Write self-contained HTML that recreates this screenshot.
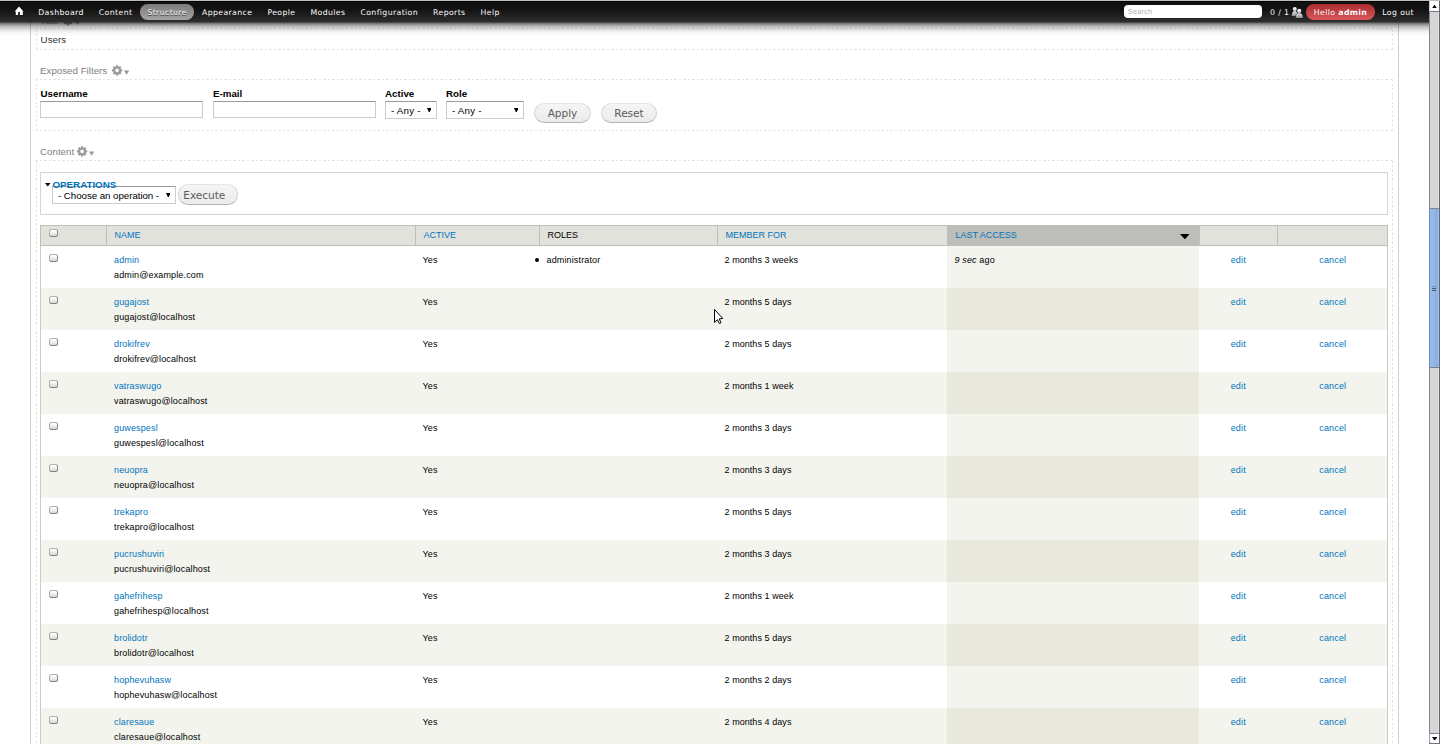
<!DOCTYPE html>
<html lang="en">
<head>
<meta charset="utf-8">
<title>Users | Views</title>
<style>
*{box-sizing:border-box;}
html,body{margin:0;padding:0;}
body{width:1440px;height:744px;overflow:hidden;position:relative;background:#fff;color:#000;
  font-family:"Liberation Sans",Arial,Helvetica,sans-serif;font-size:9.75px;line-height:15px;}
a{color:#0074bd;text-decoration:none;}
#page{position:absolute;left:0;top:0;width:1429px;height:744px;overflow:hidden;}
#topline{position:absolute;left:0;top:0;width:1440px;height:1px;background:#bfbfbf;z-index:50;}

/* ---------- admin toolbar ---------- */
#admin-menu{position:absolute;left:0;top:1px;width:1429px;height:21px;z-index:20;
  background:linear-gradient(#000 0,#000 1px,#111 1.5px,#121212 40%,#2e2e2e 100%);
  font-family:"DejaVu Sans",Verdana,sans-serif;font-size:7.75px;line-height:11.25px;color:#fafafa;letter-spacing:0.39px;}
#admin-shadow{position:absolute;left:0;top:22px;width:1429px;height:15px;z-index:19;pointer-events:none;
  background:linear-gradient(rgba(0,0,0,0.700) 0.5px,rgba(0,0,0,0.530) 1.5px,rgba(0,0,0,0.430) 2.5px,rgba(0,0,0,0.340) 3.5px,rgba(0,0,0,0.270) 4.5px,rgba(0,0,0,0.215) 5.5px,rgba(0,0,0,0.170) 6.5px,rgba(0,0,0,0.137) 7.5px,rgba(0,0,0,0.098) 8.5px,rgba(0,0,0,0.067) 9.5px,rgba(0,0,0,0.043) 10.5px,rgba(0,0,0,0.027) 11.5px,rgba(0,0,0,0.016) 12.5px,rgba(0,0,0,0.008) 13.5px,rgba(0,0,0,0.000) 14.5px);}
#admin-menu ul{list-style:none;margin:0;padding:0;position:absolute;top:3.4px;}
#admin-menu ul.left{left:7.5px;}
#admin-menu ul.right{right:7.5px;}
#admin-menu li{float:left;margin:0;padding:0;}
#admin-menu li a{display:block;color:#fafafa;padding:2.85px 7.5px 1.25px;height:15.35px;border-radius:7.7px;white-space:nowrap;}
#admin-menu li a.active-trail{background:linear-gradient(#7b7b7b,#a3a3a3);text-shadow:0 1px 0 #333;}
#admin-menu li.home a{position:relative;width:23.25px;}
#admin-menu li.home svg{position:absolute;left:6.5px;top:1.6px;}
#admin-menu li.account a{background:linear-gradient(#aa2c31,#d9585b);}
#admin-menu li.search{padding:0.85px 0 0 0.5px;}
#admin-menu li.search .box{display:block;width:138px;height:13px;border-radius:4px;background:#fff;color:#b0b0b0;letter-spacing:0;
  font-size:7.25px;line-height:13px;padding:0 0 0 4px;letter-spacing:0.2px;font-family:"Liberation Sans",Arial,sans-serif;}
#admin-menu li.users a{padding-right:17px;position:relative;padding-left:8px;}
#admin-menu li.users svg{position:absolute;left:29.1px;top:1.6px;width:13px;height:13px;}

/* ---------- frame ---------- */
#frame{position:absolute;left:30px;top:-40px;width:1369px;height:900px;border-left:1px solid #cfcfcf;border-right:1px solid #cfcfcf;}
.section-title{position:absolute;left:40px;color:#818181;font-size:9.75px;line-height:15.75px;white-space:nowrap;}
.preview-section{position:absolute;left:36px;width:1357px;border:1px solid transparent;padding:0;background-origin:border-box;
  background:
   repeating-linear-gradient(90deg,#e3e3e3 0,#e3e3e3 2.25px,transparent 2.25px,transparent 4.5px) -0.5px 0/100% 1px no-repeat border-box,
   repeating-linear-gradient(90deg,#e3e3e3 0,#e3e3e3 2.25px,transparent 2.25px,transparent 4.5px) -0.5px 100%/100% 1px no-repeat border-box,
   repeating-linear-gradient(0deg,#e3e3e3 0,#e3e3e3 2.25px,transparent 2.25px,transparent 4.5px) 0 0/1px 100% no-repeat border-box,
   repeating-linear-gradient(0deg,#e3e3e3 0,#e3e3e3 2.25px,transparent 2.25px,transparent 4.5px) 100% 0/1px 100% no-repeat border-box;}
.ptitle{position:absolute;left:3.6px;top:2.9px;line-height:15px;color:#333;}
.gear{vertical-align:-2px;margin-left:4.5px;}
/* exposed form (coords relative to padding box of section: x0=37,y0=80) */
form.exposed{display:block;margin:0;}
form.exposed .w{position:absolute;top:6.4px;}
form.exposed label{display:block;font-weight:bold;font-size:9.75px;line-height:15px;height:14.6px;color:#000;}
.txt{display:block;width:163px;margin-left:-0.5px;height:17px;border:1px solid #ccc;border-top-color:#999;background:#fff;}
.select{display:block;position:relative;height:18px;border:1px solid #ccc;border-top-color:#999;background:#fff;
  font-size:9.75px;line-height:16px;padding:1px 0 0 5px;color:#000;white-space:nowrap;letter-spacing:0.2px;}
.select .sa{position:absolute;right:4.7px;top:6px;}
.btn{position:absolute;display:block;height:20px;border:1px solid #e4e4e4;border-bottom-color:#b4b4b4;border-left-color:#d2d2d2;border-right-color:#d2d2d2;
  border-radius:10px;background:linear-gradient(#f5f5f5,#ebebeb);color:#5a5a5a;text-align:center;
  font-family:"DejaVu Sans",Verdana,sans-serif;font-size:10.5px;line-height:18px;}
.btn.exec{height:21px;line-height:21px;text-align:left;padding-left:4.3px;}
/* operations fieldset (section padding box origin x0=37,y0=161) */
fieldset.ops{position:absolute;left:3px;top:11px;width:1348px;height:43px;margin:0;padding:0;border:1px solid #d4d4d4;}
fieldset.ops legend{position:absolute;z-index:3;left:4px;top:3.5px;padding:0;font-weight:bold;font-size:9.75px;line-height:15px;text-transform:uppercase;white-space:nowrap;}
fieldset.ops legend svg{vertical-align:1px;margin-right:2px;}
/* table */
table.views{position:absolute;left:3px;top:64px;width:1348px;table-layout:fixed;border-collapse:separate;border-spacing:0;
  font-size:9px;line-height:15px;}
table.views th{text-align:left;text-transform:uppercase;font-weight:normal;background:#e1e2dc;border:solid #bebfb9;border-width:1px 0 1px 1px;
  padding:0.5px 7px 0 7.5px;color:#000;height:21px;line-height:15px;vertical-align:middle;}
table.views th:last-child{border-right-width:1px;}
table.views th.active{background:#bdbeb9;}
table.views th.active a{display:block;position:relative;}
table.views th .sort{position:absolute;right:2.5px;top:5.6px;}
table.views td{padding:7px 7px 5px 7.5px;vertical-align:top;height:42px;letter-spacing:0.14px;}
table.views td:first-child{border-left:1px solid #cbccc6;padding-left:7px;}
table.views td:last-child{border-right:1px solid #cbccc6;padding-right:6px;}
table.views tr.odd td{background:#fff;}
table.views tr.even td{background:#f3f4ee;}
table.views tr.odd td.active{background:#f3f4ee;}
table.views tr.even td.active{background:#e9e9dd;}
table.views td.op{text-align:center;}
table.views td.nm{padding-left:8px;}
table.views td.mf{letter-spacing:0.06px;}
table.views td ul{margin:0;padding:0;list-style:none;}
table.views td ul li{position:relative;}
table.views td ul li:before{content:"";position:absolute;left:-12px;top:4.8px;width:4px;height:4px;border-radius:50%;background:#000;}
table.views em{font-style:italic;}
.cb{display:block;width:8.8px;height:8.8px;border:1px solid #9b9b98;border-color:#b0b0ad #8a8a87 #7f7f7c #aaaaa7;border-radius:2.5px;
  background:linear-gradient(#ffffff 15%,#d6d6d6);margin:0.7px 0 0 0.9px;position:relative;}
th .cb{top:-3px;}
/* scrollbar */
#sb{position:absolute;left:1429px;top:1px;width:11px;height:743px;background:#d6d5d3;border-left:1px solid #7c8591;border-right:1px solid #5f6874;border-bottom:1px solid #6b7480;
  box-shadow:inset -1px 0 0 #e4e2e0;}
#sb .up,#sb .down{position:absolute;left:-1px;width:10px;background:#fff;border-left:1px solid #c5c9ce;}
#sb .up{top:0;border-bottom:1px solid #6f7a86;height:11px;}
#sb .down{bottom:0;border-top:1px solid #7f8a96;height:10px;border-left-color:#99a1ab;border-bottom-left-radius:2px;}
#sb svg{position:absolute;}
#sb .thumb{position:absolute;left:-1px;top:207px;width:10px;height:160px;border-left:1px solid #6c8ab5;border-top:1px solid #7f8791;border-bottom:1px solid #777f89;
  background:linear-gradient(90deg,#97baea 0,#95b8e8 48%,#8bafde 52%,#8db1e1 88%,#9dbfee 89%);}
#cursor{position:absolute;left:713px;top:308.3px;z-index:60;}

/* native controls reset */
input.txt,input.box,button.btn,input.cb,.select select{-webkit-appearance:none;appearance:none;outline:0;box-shadow:none;}
input.txt,input.box,button.btn,.select select{margin:0;}
input.txt{padding:0 2px;font:inherit;margin-left:-0.5px;border-radius:0;}
.select select{display:block;position:absolute;left:0;top:0;width:100%;height:100%;border:0;border-radius:0;background:transparent;padding:1px 0 0 5px;
  font:inherit;letter-spacing:inherit;line-height:16px;color:#000;}
button.btn{padding:0;cursor:pointer;}
button.btn.exec{padding-left:4.3px;}
input.cb{padding:0;margin:0.7px 0 0 0.9px;}
#admin-menu li.search input.box{border:0;}
#admin-menu li.search input.box::placeholder{color:#b0b0b0;opacity:1;}
</style>
</head>
<body>
<div id="topline"></div>
<div id="page">
<div id="admin-menu">
  <ul class="left">
    <li class="home"><a href="#"><svg width="11" height="10" viewBox="0 0 11 10"><path fill="#fff" d="M5 0.6 L9.5 5.5 H8.8 V9.1 H5.95 V6 H4.15 V9.1 H1.8 V5.5 H0.7 Z"/></svg></a></li>
    <li><a href="#">Dashboard</a></li>
    <li><a href="#">Content</a></li>
    <li><a href="#" class="active-trail">Structure</a></li>
    <li><a href="#">Appearance</a></li>
    <li><a href="#">People</a></li>
    <li><a href="#">Modules</a></li>
    <li><a href="#">Configuration</a></li>
    <li><a href="#">Reports</a></li>
    <li><a href="#">Help</a></li>
  </ul>
  <ul class="right">
    <li class="search"><input type="text" class="box" placeholder="Search"></li>
    <li class="users"><a href="#">0 / 1<svg viewBox="0 0 13 13"><defs><linearGradient id="ub" x1="0" y1="0" x2="0" y2="1"><stop offset="0" stop-color="#e6e6e6"/><stop offset="1" stop-color="#8e8e8e"/></linearGradient><linearGradient id="uh" x1="0" y1="0" x2="0" y2="1"><stop offset="0" stop-color="#ffffff"/><stop offset="1" stop-color="#d2d2d2"/></linearGradient></defs><g><path d="M0.7 10.1 C0.7 6.6 2 5 3.75 5 C5.5 5 6.8 6.6 6.8 10.1 Z" fill="url(#ub)"/><circle cx="3.75" cy="3" r="2.05" fill="url(#uh)"/></g><g stroke="#1a1a1a" stroke-width="0.7" paint-order="stroke"><path d="M4.7 12 C4.7 8.3 6.2 6.9 8.2 6.9 C10.2 6.9 11.8 8.3 11.8 12 Z" fill="url(#ub)"/><circle cx="8.2" cy="4.9" r="2.1" fill="url(#uh)"/></g></svg></a></li>
    <li class="account"><a href="#">Hello <strong>admin</strong></a></li>
    <li><a href="#">Log out</a></li>
  </ul>
</div>
<div id="admin-shadow"></div>
<div id="frame"></div>
<div class="section-title" style="top:12.5px">Title<svg class="gear" width="18" height="11" viewBox="0 0 18 11"><path fill="#999a95" fill-rule="evenodd" d="M3.90 1.64 L4.02 0.31 L6.18 0.31 L6.30 1.64 L6.91 1.89 L7.93 1.04 L9.46 2.57 L8.61 3.59 L8.86 4.20 L10.19 4.32 L10.19 6.48 L8.86 6.60 L8.61 7.21 L9.46 8.23 L7.93 9.76 L6.91 8.91 L6.30 9.16 L6.18 10.49 L4.02 10.49 L3.90 9.16 L3.29 8.91 L2.27 9.76 L0.74 8.23 L1.59 7.21 L1.34 6.60 L0.01 6.48 L0.01 4.32 L1.34 4.20 L1.59 3.59 L0.74 2.57 L2.27 1.04 L3.29 1.89 Z M3.30 5.40 A1.80 1.80 0 1 0 6.90 5.40 A1.80 1.80 0 1 0 3.30 5.40 Z"/><path fill="#999a95" d="M12 5.4 H17.2 L14.6 9.7 Z"/></svg></div>
<div class="preview-section" style="top:28px;height:22px"><div class="ptitle">Users</div></div>
<div class="section-title" style="top:63.25px">Exposed Filters<svg class="gear" width="18" height="11" viewBox="0 0 18 11"><path fill="#999a95" fill-rule="evenodd" d="M3.90 1.64 L4.02 0.31 L6.18 0.31 L6.30 1.64 L6.91 1.89 L7.93 1.04 L9.46 2.57 L8.61 3.59 L8.86 4.20 L10.19 4.32 L10.19 6.48 L8.86 6.60 L8.61 7.21 L9.46 8.23 L7.93 9.76 L6.91 8.91 L6.30 9.16 L6.18 10.49 L4.02 10.49 L3.90 9.16 L3.29 8.91 L2.27 9.76 L0.74 8.23 L1.59 7.21 L1.34 6.60 L0.01 6.48 L0.01 4.32 L1.34 4.20 L1.59 3.59 L0.74 2.57 L2.27 1.04 L3.29 1.89 Z M3.30 5.40 A1.80 1.80 0 1 0 6.90 5.40 A1.80 1.80 0 1 0 3.30 5.40 Z"/><path fill="#999a95" d="M12 5.4 H17.2 L14.6 9.7 Z"/></svg></div>
<div class="preview-section" style="top:79px;height:52px">
  <form class="exposed">
    <div class="w" style="left:3.5px"><label for="f-name">Username</label><input type="text" id="f-name" class="txt" size="30"></div>
    <div class="w" style="left:176px"><label for="f-mail">E-mail</label><input type="text" id="f-mail" class="txt" size="30"></div>
    <div class="w" style="left:348px"><label for="f-act">Active</label><span class="select" style="width:52px"><select id="f-act"><option>- Any -</option><option>Yes</option><option>No</option></select><svg class="sa" width="4.6" height="4.4" viewBox="0 0 4.6 4.4"><path d="M0 0 H4.6 L2.6 4.4 H2 Z" fill="#000"/></svg></span></div>
    <div class="w" style="left:409px"><label for="f-role">Role</label><span class="select" style="width:78px"><select id="f-role"><option>- Any -</option><option>administrator</option></select><svg class="sa" width="4.6" height="4.4" viewBox="0 0 4.6 4.4"><path d="M0 0 H4.6 L2.6 4.4 H2 Z" fill="#000"/></svg></span></div>
    <button type="button" class="btn" style="left:497px;top:23px;width:57px">Apply</button>
    <button type="button" class="btn" style="left:564px;top:23px;width:56px">Reset</button>
  </form>
</div>
<div class="section-title" style="top:144.25px">Content<svg class="gear" style="margin-left:3.3px" width="18" height="11" viewBox="0 0 18 11"><path fill="#999a95" fill-rule="evenodd" d="M3.90 1.64 L4.02 0.31 L6.18 0.31 L6.30 1.64 L6.91 1.89 L7.93 1.04 L9.46 2.57 L8.61 3.59 L8.86 4.20 L10.19 4.32 L10.19 6.48 L8.86 6.60 L8.61 7.21 L9.46 8.23 L7.93 9.76 L6.91 8.91 L6.30 9.16 L6.18 10.49 L4.02 10.49 L3.90 9.16 L3.29 8.91 L2.27 9.76 L0.74 8.23 L1.59 7.21 L1.34 6.60 L0.01 6.48 L0.01 4.32 L1.34 4.20 L1.59 3.59 L0.74 2.57 L2.27 1.04 L3.29 1.89 Z M3.30 5.40 A1.80 1.80 0 1 0 6.90 5.40 A1.80 1.80 0 1 0 3.30 5.40 Z"/><path fill="#999a95" d="M12 5.4 H17.2 L14.6 9.7 Z"/></svg></div>
<div class="preview-section" style="top:160px;height:700px">
<fieldset class="ops"><legend><svg width="5.5" height="3.5" viewBox="0 0 5.5 3.5"><path d="M0 0 H5.5 L2.75 3.5 Z" fill="#000"/></svg><a href="#">Operations</a></legend>
  <span class="select" style="position:absolute;left:11px;top:13px;width:124px;margin:0;letter-spacing:-0.06px"><select><option>- Choose an operation -</option></select><svg class="sa" width="4.6" height="4.4" viewBox="0 0 4.6 4.4"><path d="M0 0 H4.6 L2.6 4.4 H2 Z" fill="#000"/></svg></span>
  <button type="button" class="btn exec" style="left:137px;top:11px;width:60px">Execute</button>
</fieldset>
<table class="views"><colgroup><col style="width:66px"><col style="width:309px"><col style="width:124px"><col style="width:178px"><col style="width:230px"><col style="width:252px"><col style="width:78px"><col style="width:111px"></colgroup>
<thead><tr><th class="c0"><input type="checkbox" class="cb"></th><th><a href="#">Name</a></th><th><a href="#">Active</a></th><th>Roles</th><th><a href="#">Member for</a></th><th class="active"><a href="#">Last access<svg class="sort" width="9.6" height="5.4" viewBox="0 0 9.6 5.4"><path d="M0 0 H9.6 L4.8 5.4 Z" fill="#000"/></svg></a></th><th></th><th></th></tr></thead><tbody>
<tr class="odd"><td class="c0"><input type="checkbox" class="cb"></td><td class="nm"><a href="#">admin</a><br>admin@example.com</td><td>Yes</td><td><ul><li>administrator</li></ul></td><td class="mf">2 months 3 weeks</td><td class="active"><em>9 sec</em> ago</td><td class="op"><a href="#">edit</a></td><td class="op"><a href="#">cancel</a></td></tr>
<tr class="even"><td class="c0"><input type="checkbox" class="cb"></td><td class="nm"><a href="#">gugajost</a><br>gugajost@localhost</td><td>Yes</td><td></td><td class="mf">2 months 5 days</td><td class="active"></td><td class="op"><a href="#">edit</a></td><td class="op"><a href="#">cancel</a></td></tr>
<tr class="odd"><td class="c0"><input type="checkbox" class="cb"></td><td class="nm"><a href="#">drokifrev</a><br>drokifrev@localhost</td><td>Yes</td><td></td><td class="mf">2 months 5 days</td><td class="active"></td><td class="op"><a href="#">edit</a></td><td class="op"><a href="#">cancel</a></td></tr>
<tr class="even"><td class="c0"><input type="checkbox" class="cb"></td><td class="nm"><a href="#">vatraswugo</a><br>vatraswugo@localhost</td><td>Yes</td><td></td><td class="mf">2 months 1 week</td><td class="active"></td><td class="op"><a href="#">edit</a></td><td class="op"><a href="#">cancel</a></td></tr>
<tr class="odd"><td class="c0"><input type="checkbox" class="cb"></td><td class="nm"><a href="#">guwespesl</a><br>guwespesl@localhost</td><td>Yes</td><td></td><td class="mf">2 months 3 days</td><td class="active"></td><td class="op"><a href="#">edit</a></td><td class="op"><a href="#">cancel</a></td></tr>
<tr class="even"><td class="c0"><input type="checkbox" class="cb"></td><td class="nm"><a href="#">neuopra</a><br>neuopra@localhost</td><td>Yes</td><td></td><td class="mf">2 months 3 days</td><td class="active"></td><td class="op"><a href="#">edit</a></td><td class="op"><a href="#">cancel</a></td></tr>
<tr class="odd"><td class="c0"><input type="checkbox" class="cb"></td><td class="nm"><a href="#">trekapro</a><br>trekapro@localhost</td><td>Yes</td><td></td><td class="mf">2 months 5 days</td><td class="active"></td><td class="op"><a href="#">edit</a></td><td class="op"><a href="#">cancel</a></td></tr>
<tr class="even"><td class="c0"><input type="checkbox" class="cb"></td><td class="nm"><a href="#">pucrushuviri</a><br>pucrushuviri@localhost</td><td>Yes</td><td></td><td class="mf">2 months 3 days</td><td class="active"></td><td class="op"><a href="#">edit</a></td><td class="op"><a href="#">cancel</a></td></tr>
<tr class="odd"><td class="c0"><input type="checkbox" class="cb"></td><td class="nm"><a href="#">gahefrihesp</a><br>gahefrihesp@localhost</td><td>Yes</td><td></td><td class="mf">2 months 1 week</td><td class="active"></td><td class="op"><a href="#">edit</a></td><td class="op"><a href="#">cancel</a></td></tr>
<tr class="even"><td class="c0"><input type="checkbox" class="cb"></td><td class="nm"><a href="#">brolidotr</a><br>brolidotr@localhost</td><td>Yes</td><td></td><td class="mf">2 months 5 days</td><td class="active"></td><td class="op"><a href="#">edit</a></td><td class="op"><a href="#">cancel</a></td></tr>
<tr class="odd"><td class="c0"><input type="checkbox" class="cb"></td><td class="nm"><a href="#">hophevuhasw</a><br>hophevuhasw@localhost</td><td>Yes</td><td></td><td class="mf">2 months 2 days</td><td class="active"></td><td class="op"><a href="#">edit</a></td><td class="op"><a href="#">cancel</a></td></tr>
<tr class="even"><td class="c0"><input type="checkbox" class="cb"></td><td class="nm"><a href="#">claresaue</a><br>claresaue@localhost</td><td>Yes</td><td></td><td class="mf">2 months 4 days</td><td class="active"></td><td class="op"><a href="#">edit</a></td><td class="op"><a href="#">cancel</a></td></tr>
</tbody></table>
</div>
</div><!-- /page -->
<div id="sb"><div class="up"><svg width="5" height="3.4" viewBox="0 0 5 3.4" style="left:2px;top:3.7px"><path d="M0 3.4 L2.2 0 H2.8 L5 3.4 Z" fill="#000"/></svg></div>
<div class="thumb"><svg width="4" height="5" viewBox="0 0 4 5" style="left:2px;top:77px"><path d="M0 0.5H4" stroke="#7d93b8" stroke-width="1"/><path d="M0 2.5H4M0 4.5H4" stroke="#4c5a72" stroke-width="1"/></svg></div>
<div class="down"><svg width="5.4" height="3.4" viewBox="0 0 5.4 3.4" style="left:1.8px;top:3px"><path d="M0 0 H5.4 L3 3.4 H2.4 Z" fill="#000"/></svg></div></div>
<svg id="cursor" width="11" height="17" viewBox="0 0 11 17"><path d="M1.5 1.5 V14.4 L4.4 11.7 L6.3 15.5 L8 14.7 L6.2 10.9 L9.8 10.5 Z" fill="#fff" stroke="#000" stroke-width="1" stroke-linejoin="miter"/></svg>
</body>
</html>
